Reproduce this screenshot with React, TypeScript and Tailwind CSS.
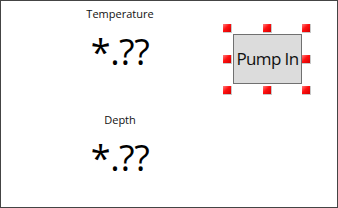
import React from "react";

const font = { fontFamily: '"Open Sans", "Noto Sans", sans-serif' };

const Handle: React.FC<{ className?: string }> = ({ className = "" }) => (
  <div
    className={`w-[9px] h-[9px] border-r border-b border-[#c8c8c8] bg-[linear-gradient(135deg,#ff8080_0%,#ff1010_45%,#d00000_100%)] ${className}`}
  />
);

const Readout: React.FC<{ label: string; value: string }> = ({ label, value }) => (
  <div className="flex flex-col items-center">
    <div className="text-[11px] leading-[14px] text-[#111]">{label}</div>
    <div className="mt-[13px] text-[36px] leading-[36px] text-black tracking-[-0.5px]">{value}</div>
  </div>
);

export default function App() {
  return (
    <div
      className="w-[338px] h-[208px] border border-[#444] bg-white flex text-black"
      style={font}
    >
      <div className="w-[238px] flex flex-col items-center pt-[6px] gap-[43px]">
        <Readout label="Temperature" value="*.??" />
        <Readout label="Depth" value="*.??" />
      </div>
      {/* selected widget: 3x3 grid of resize handles around the button */}
      <div className="pt-[23px] pl-[-16px]">
        <div className="ml-[-16px] grid grid-cols-[10px_69px_10px] grid-rows-[10px_50px_11px]">
          <Handle className="self-start justify-self-start" />
          <Handle className="self-start justify-self-center" />
          <Handle className="self-start justify-self-start" />

          <Handle className="self-center justify-self-start" />
          <div className="border border-[#707070] bg-[#dcdcdc] flex items-center justify-center">
            <span className="whitespace-nowrap text-[17px] leading-[20px] tracking-[-0.6px] text-[#111]">
              Pump In
            </span>
          </div>
          <Handle className="self-center justify-self-start" />

          <Handle className="self-end justify-self-start" />
          <Handle className="self-end justify-self-center" />
          <Handle className="self-end justify-self-start" />
        </div>
      </div>
    </div>
  );
}
